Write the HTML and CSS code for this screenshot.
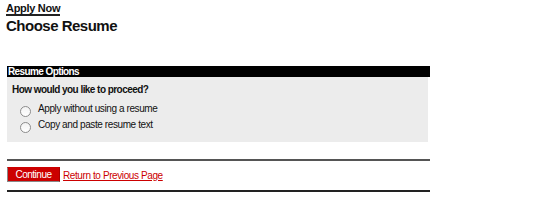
FILE: index.html
```html
<!DOCTYPE html>
<html lang="en">
<head>
    <meta charset="UTF-8">
    <meta name="viewport" content="width=device-width, initial-scale=1.0">
    <title>Choose Resume</title>
    <link rel="stylesheet" href="styles.css">
</head>
<body>

    <div class="page">
        <div class="apply"><span>Apply Now</span></div>
        <h1 class="title">Choose Resume</h1>

        <div class="options">
            <div class="options-head">Resume Options</div>
            <div class="options-body">
                <p class="question">How would you like to proceed?</p>
                <label class="choice"><span class="radio"></span>Apply without using a resume</label>
                <label class="choice"><span class="radio"></span>Copy and paste resume text</label>
            </div>
        </div>

        <div class="rule"></div>
        <div class="actions">
            <button class="continue">Continue</button>
            <a href="#" class="back">Return to Previous Page</a>
        </div>
        <div class="rule rule-dark"></div>
    </div>

</body>
</html>
```

FILE: styles.css
```css
body {
    margin: 0;
    font-family: "Liberation Sans", Arial, sans-serif;
    background-color: #fff;
    color: #111;
}

.page {
    padding: 2px 0 0 6px;
}

.apply {
    font-size: 11px;
    font-weight: bold;
    line-height: 12px;
    letter-spacing: -0.3px;
}

.apply span {
    display: inline-block;
    border-bottom: 2px solid #222;
}

.title {
    margin: 1px 0 0 0;
    font-size: 15px;
    line-height: 18px;
    letter-spacing: -0.5px;
}

.options {
    margin: 31px 0 0 1px;
    width: 423px;
}

.options-head {
    background-color: #000;
    color: #fff;
    font-size: 10px;
    font-weight: bold;
    line-height: 10px;
    padding-top: 1px;
    letter-spacing: -0.6px;
    padding-left: 1px;
}

.options-body {
    width: 421px;
    background-color: #ececec;
    padding: 7px 0 9px 0;
}

.question {
    margin: 0 0 5px 5px;
    font-size: 10px;
    font-weight: bold;
    line-height: 12px;
    letter-spacing: -0.55px;
}

.choice {
    display: flex;
    align-items: flex-start;
    height: 16px;
    line-height: 16px;
    font-size: 10px;
    letter-spacing: -0.4px;
    padding-left: 13px;
}

.radio {
    width: 9px;
    height: 9px;
    margin: 5px 7px 0 0;
    border: 1px solid #8c8c8c;
    border-radius: 50%;
    background: linear-gradient(#f2f2f2, #fff);
}

.rule {
    margin: 17px 0 0 1px;
    width: 423px;
    height: 2px;
    background-color: #555;
}

.rule-dark {
    margin-top: 8px;
    background-color: #222;
}

.actions {
    display: flex;
    align-items: flex-start;
    margin: 6px 0 0 1px;
}

.continue {
    width: 53px;
    height: 15px;
    padding: 0;
    border: 1px solid;
    border-color: #c00 #a00 #888 #888;
    background-color: #cc0000;
    color: #fff;
    font-family: "Liberation Sans", Arial, sans-serif;
    font-size: 10px;
    line-height: 12px;
    letter-spacing: -0.5px;
}

.back {
    margin: 3px 0 0 3px;
    color: #cc0000;
    font-size: 10px;
    line-height: 12px;
    letter-spacing: -0.4px;
}
```
